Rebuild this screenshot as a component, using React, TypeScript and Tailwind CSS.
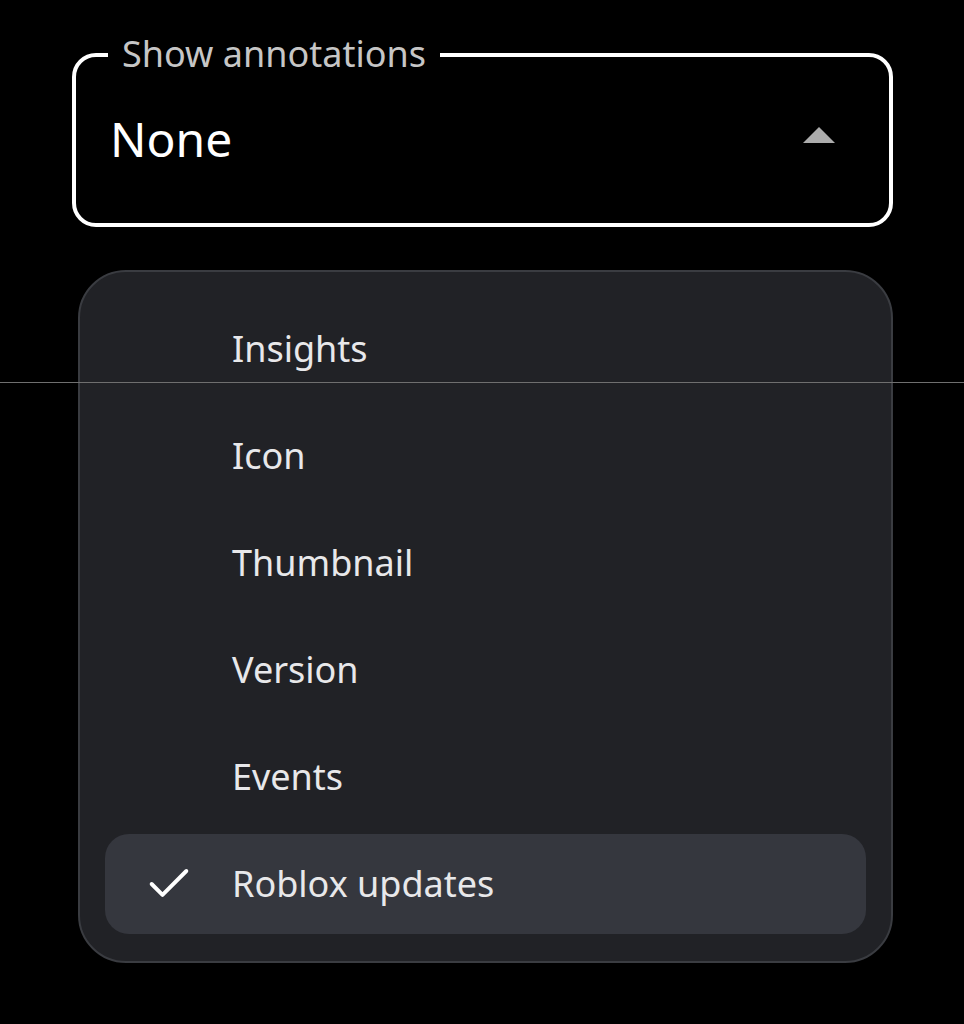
import { Check } from 'lucide-react';

const options = ['Insights', 'Icon', 'Thumbnail', 'Version', 'Events', 'Roblox updates'];

export default function App() {
  const selected = 'Roblox updates';

  return (
    <div className="relative min-h-[1024px] w-full bg-black font-['Noto_Sans',sans-serif] overflow-hidden">
      <div className="pl-[72px] pr-[71px] pt-[53px]">
        {/* select field */}
        <div className="relative h-[174px] rounded-[24px] border-[4px] border-white flex items-center justify-between pl-[34px] pr-[54px]">
          <span className="absolute left-[32px] top-[-25px] bg-black px-[14px] text-[36px] leading-[44px] text-[#c6c6c6]">
            Show annotations
          </span>
          <span className="text-[48px] leading-none text-white -mt-[2px]">None</span>
          <svg width="32" height="16" viewBox="0 0 32 16" className="-mt-[11px]">
            <path d="M0 16 L16 0 L32 16 Z" fill="#acacac" />
          </svg>
        </div>

        {/* menu */}
        <div className="mt-[43px] ml-[6px] rounded-[48px] border-2 border-[#3a3c41] bg-[#212226] px-[25px] py-[27px] flex flex-col gap-[7px]">
          {options.map((o) => (
            <div
              key={o}
              className={`h-[100px] rounded-[24px] flex items-center ${o === selected ? 'bg-[#35373e]' : ''}`}
            >
              <div className="w-[127px] flex justify-center">
                {o === selected && <Check size={52} strokeWidth={1.8} className="text-white" />}
              </div>
              <span className="text-[36px] leading-none text-[#e8e8ea]">{o}</span>
            </div>
          ))}
        </div>
      </div>

      {/* thin scan line */}
      <div className="absolute left-0 right-0 top-[382px] h-px bg-[#6f6f6f]" />
    </div>
  );
}
